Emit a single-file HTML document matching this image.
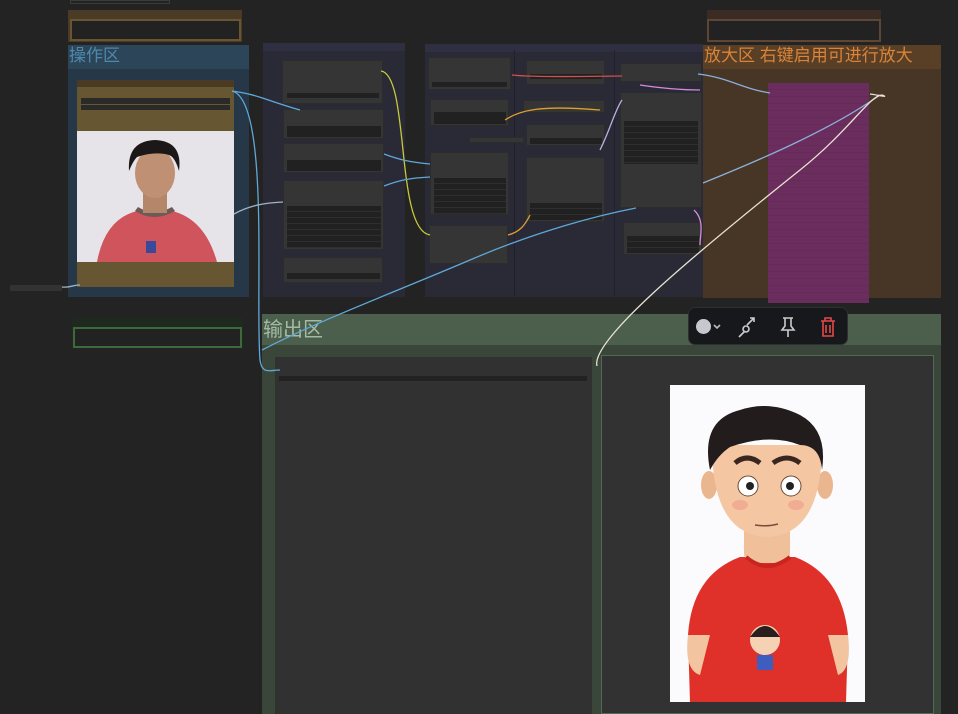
<!DOCTYPE html>
<html><head><meta charset="utf-8"><style>
*{margin:0;padding:0;box-sizing:border-box}
body{width:958px;height:714px;overflow:hidden;background:#232323;position:relative;font-family:"Liberation Sans","Noto Sans CJK SC",sans-serif}
div{position:absolute}
.n{background:#353535;border:1px solid #2c2c2c}
.w{background:#212121}
.grp{font-size:17px;line-height:22px;padding-left:1px}
svg{position:absolute;left:0;top:0}
</style></head><body>

<!-- top-left small nodes -->
<div style="left:70px;top:0;width:100px;height:4px;border:1px solid #3a3a3a"></div>
<div style="left:68px;top:10px;width:174px;height:32px;background:#4a3b26"></div>
<div style="left:70px;top:19px;width:171px;height:22px;background:#222;border:2px solid #6b5531"></div>

<!-- 操作区 -->
<div style="left:68px;top:45px;width:181px;height:252px;background:#263847"></div>
<div class="grp" style="left:68px;top:45px;width:181px;height:24px;background:#2d4558;color:#4d89ad">操作区</div>
<div style="left:77px;top:80px;width:157px;height:207px;background:#665631"></div>
<div style="left:77px;top:80px;width:157px;height:7px;background:#4a3a24"></div>
<div style="left:81px;top:98px;width:149px;height:6px;background:#2a2a28"></div>
<div style="left:81px;top:105px;width:149px;height:5px;background:#2a2a28"></div>
<div style="left:77px;top:131px;width:157px;height:131px;background:#e6e4e9;overflow:hidden">
<svg width="157" height="131" viewBox="0 0 157 131">
<path d="M20 131 Q28 88 60 80 L95 80 Q128 88 140 131Z" fill="#cf545c"/>
<path d="M58 80 Q77 92 98 80 L95 76 Q77 86 61 76Z" fill="#6b5a55"/>
<rect x="66" y="60" width="24" height="22" fill="#b5876a"/>
<ellipse cx="78" cy="42" rx="20" ry="25" fill="#c09074"/>
<path d="M52 40 Q50 10 78 9 Q106 10 102 40 Q98 26 92 24 Q78 20 60 26 Q56 30 52 40Z" fill="#1c1818"/>
<rect x="69" y="110" width="10" height="12" fill="#3a4a9a"/>
</svg></div>

<div style="left:10px;top:285px;width:52px;height:6px;background:#333"></div>
<div style="left:72px;top:318px;width:171px;height:30px;background:#1f2a1f"></div>
<div style="left:73px;top:327px;width:169px;height:21px;border:2px solid #3d6a3d;background:#222"></div>

<!-- middle groups -->
<div style="left:263px;top:43px;width:142px;height:254px;background:#292a36"></div>
<div style="left:425px;top:44px;width:278px;height:253px;background:#292a36"></div>
<div style="left:425px;top:44px;width:278px;height:8px;background:#2e2f40"></div>
<div style="left:263px;top:43px;width:142px;height:8px;background:#2e2f40"></div>
<div style="left:514px;top:50px;width:1px;height:246px;background:#20212a"></div>
<div style="left:614px;top:50px;width:1px;height:246px;background:#20212a"></div>

<div class="n" style="left:282px;top:60px;width:101px;height:44px"><div class="w" style="left:4px;top:32px;width:92px;height:5px"></div></div>
<div class="n" style="left:283px;top:109px;width:101px;height:30px"><div class="w" style="left:3px;top:16px;width:94px;height:11px"></div></div>
<div class="n" style="left:283px;top:143px;width:101px;height:30px"><div class="w" style="left:3px;top:16px;width:94px;height:11px"></div></div>
<div class="n" style="left:283px;top:180px;width:101px;height:70px"><div class="w" style="left:3px;top:25px;width:94px;height:42px;background:repeating-linear-gradient(#212121 0 5px,#2e2e2e 5px 6px)"></div></div>
<div class="n" style="left:283px;top:257px;width:100px;height:26px"><div class="w" style="left:3px;top:15px;width:93px;height:6px"></div></div>

<div class="n" style="left:428px;top:57px;width:83px;height:33px"><div class="w" style="left:3px;top:24px;width:75px;height:5px"></div></div>
<div class="n" style="left:430px;top:99px;width:79px;height:27px"><div class="w" style="left:3px;top:12px;width:72px;height:12px"></div></div>
<div class="n" style="left:469px;top:137px;width:55px;height:6px"></div>
<div class="n" style="left:430px;top:152px;width:79px;height:63px"><div class="w" style="left:3px;top:25px;width:72px;height:36px;background:repeating-linear-gradient(#212121 0 5px,#2e2e2e 5px 6px)"></div></div>
<div class="n" style="left:429px;top:225px;width:79px;height:39px"></div>

<div class="n" style="left:526px;top:60px;width:79px;height:25px"><div class="w" style="left:3px;top:13px;width:72px;height:5px"></div></div>
<div class="n" style="left:523px;top:100px;width:82px;height:13px"></div>
<div class="n" style="left:526px;top:124px;width:79px;height:22px"><div class="w" style="left:3px;top:13px;width:72px;height:6px"></div></div>
<div class="n" style="left:526px;top:157px;width:79px;height:65px"><div class="w" style="left:3px;top:45px;width:72px;height:17px;background:repeating-linear-gradient(#212121 0 5px,#2e2e2e 5px 6px)"></div></div>

<div class="n" style="left:620px;top:63px;width:82px;height:19px"></div>
<div class="n" style="left:620px;top:92px;width:82px;height:116px"><div class="w" style="left:3px;top:28px;width:74px;height:43px;background:repeating-linear-gradient(#212121 0 5px,#2e2e2e 5px 6px)"></div></div>
<div class="n" style="left:623px;top:222px;width:79px;height:33px"><div class="w" style="left:3px;top:13px;width:72px;height:17px;background:repeating-linear-gradient(#212121 0 5px,#2e2e2e 5px 6px)"></div></div>

<!-- top right node -->
<div style="left:707px;top:10px;width:174px;height:32px;background:#3a2c24"></div>
<div style="left:707px;top:19px;width:174px;height:23px;border:2px solid #5e4634;background:#222"></div>

<!-- 放大区 -->
<div style="left:703px;top:45px;width:238px;height:253px;background:#473526"></div>
<div class="grp" style="left:703px;top:45px;width:238px;height:24px;background:#5a3f27;color:#d8843a">放大区 右键启用可进行放大</div>
<div style="left:768px;top:83px;width:101px;height:220px;background:repeating-linear-gradient(#6b2d5e 0 6px,#652a58 6px 7px)"></div>

<!-- 输出区 -->
<div style="left:262px;top:314px;width:679px;height:400px;background:#394639"></div>
<div style="left:262px;top:314px;width:679px;height:31px;background:#4c5e4c"></div>
<div style="left:263px;top:317px;color:#a3bba3;font-size:20px;line-height:26px">输出区</div>
<div style="left:275px;top:357px;width:317px;height:357px;background:#313131;border:1px solid #2b352b"></div>
<div style="left:279px;top:376px;width:308px;height:5px;background:#222"></div>
<div style="left:601px;top:355px;width:333px;height:359px;background:#323232;border:1px solid #52695a"></div>

<div style="left:670px;top:385px;width:195px;height:317px;background:#fbfafc;overflow:hidden">
<svg width="195" height="317" viewBox="0 0 195 317">
<path d="M20 317 L18 250 Q22 190 70 172 L125 172 Q172 190 178 250 L176 317Z" fill="#e0302a"/>
<path d="M18 250 Q14 285 30 290 L40 250Z" fill="#f2c4a0"/>
<path d="M178 250 Q182 285 168 290 L158 250Z" fill="#f2c4a0"/>
<rect x="74" y="130" width="46" height="48" rx="10" fill="#efc09a"/>
<path d="M76 172 Q97 190 120 172" fill="none" stroke="#c72520" stroke-width="4"/>
<ellipse cx="39" cy="100" rx="8" ry="14" fill="#eab68f"/>
<ellipse cx="155" cy="100" rx="8" ry="14" fill="#eab68f"/>
<path d="M42 60 Q42 150 97 152 Q152 150 152 60Z" fill="#f4c7a2"/>
<path d="M40 85 Q30 35 70 25 Q100 15 130 30 Q158 45 152 85 Q150 60 130 60 Q100 48 60 62 Q48 70 40 85Z" fill="#231c1c"/>
<path d="M65 78 Q77 68 90 78" stroke="#3a2620" stroke-width="5" fill="none"/>
<path d="M103 78 Q117 68 130 78" stroke="#3a2620" stroke-width="5" fill="none"/>
<circle cx="78" cy="101" r="10" fill="#fff" stroke="#6a4a3a"/><circle cx="80" cy="101" r="4" fill="#222"/>
<circle cx="121" cy="101" r="10" fill="#fff" stroke="#6a4a3a"/><circle cx="120" cy="101" r="4" fill="#222"/>
<ellipse cx="70" cy="120" rx="8" ry="5" fill="#f09a8a" opacity=".6"/><ellipse cx="126" cy="120" rx="8" ry="5" fill="#f09a8a" opacity=".6"/>
<path d="M85 140 Q97 142 108 139" stroke="#7a4a3a" stroke-width="1.5" fill="none"/>
<circle cx="95" cy="255" r="15" fill="#f6d2b4"/><path d="M80 252 Q95 230 110 252Z" fill="#2a1e1e"/>
<rect x="87" y="270" width="16" height="15" fill="#3f5dbf"/>
</svg></div>

<!-- wires -->
<svg width="958" height="714" viewBox="0 0 958 714" fill="none" stroke-width="1.3">
<path d="M232 91 C260 95 265 100 300 110" stroke="#5fa8d8"/>
<path d="M232 91 C270 100 255 300 260 360 C262 375 270 370 280 370" stroke="#5fa8d8"/>
<path d="M234 214 C250 205 265 203 283 202" stroke="#a0b4c8"/>
<path d="M62 287 C70 288 72 285 80 285" stroke="#a0b4c8"/>
<path d="M381 71 C410 75 395 230 430 235" stroke="#c8c83a"/>
<path d="M384 154 C400 160 410 162 430 164" stroke="#5fa8d8"/>
<path d="M384 186 C400 180 410 178 430 177" stroke="#5fa8d8"/>
<path d="M262 350 C320 320 400 290 470 260 C540 230 600 215 636 208" stroke="#5fa8d8"/>
<path d="M703 183 C760 160 830 130 880 95" stroke="#8ab0d8"/>
<path d="M597 366 C590 340 700 250 800 170 C850 130 870 95 882 95 C890 98 878 95 870 94" stroke="#e8e2d0"/>
<path d="M698 74 C730 78 740 88 770 93" stroke="#8ab0d8"/>
<path d="M508 235 C520 232 525 225 530 215" stroke="#e0a030"/>
<path d="M505 120 C520 110 540 105 600 110" stroke="#e0a030"/>
<path d="M512 75 C540 78 600 76 622 76" stroke="#d05050"/>
<path d="M640 85 C660 88 680 90 700 90" stroke="#d88ad8"/>
<path d="M694 210 C705 220 700 235 700 245" stroke="#d88ad8"/>
<path d="M600 150 C610 130 615 110 622 100" stroke="#c0b0e0"/>
</svg>

<!-- toolbar -->
<div style="left:688px;top:307px;width:160px;height:38px;background:#17181b;border:1px solid #2f3034;border-radius:7px">
<div style="left:7px;top:11px;width:15px;height:15px;border-radius:50%;background:#c7c7d0"></div>
<svg width="160" height="38" viewBox="0 0 160 38" fill="none" stroke-width="1.6">
<path d="M25 17 L28 20 L31 17" stroke="#bbb"/>
<path d="M50 29 L56 23 M58 17 L65 10 M61 10 L65 10 L65 14" stroke="#ccc"/>
<circle cx="57" cy="21" r="3" stroke="#ccc"/>
<path d="M94 10 L104 10 M96 10 L96 18 L93 22 L105 22 L102 18 L102 10 M99 22 L99 29" stroke="#ccc"/>
<path d="M132 13 L146 13 M136 13 L136 10 L142 10 L142 13 M134 13 L134 28 L144 28 L144 13 M137 17 L137 25 M141 17 L141 25" stroke="#e54848"/>
</svg>
</div>
</body></html>
